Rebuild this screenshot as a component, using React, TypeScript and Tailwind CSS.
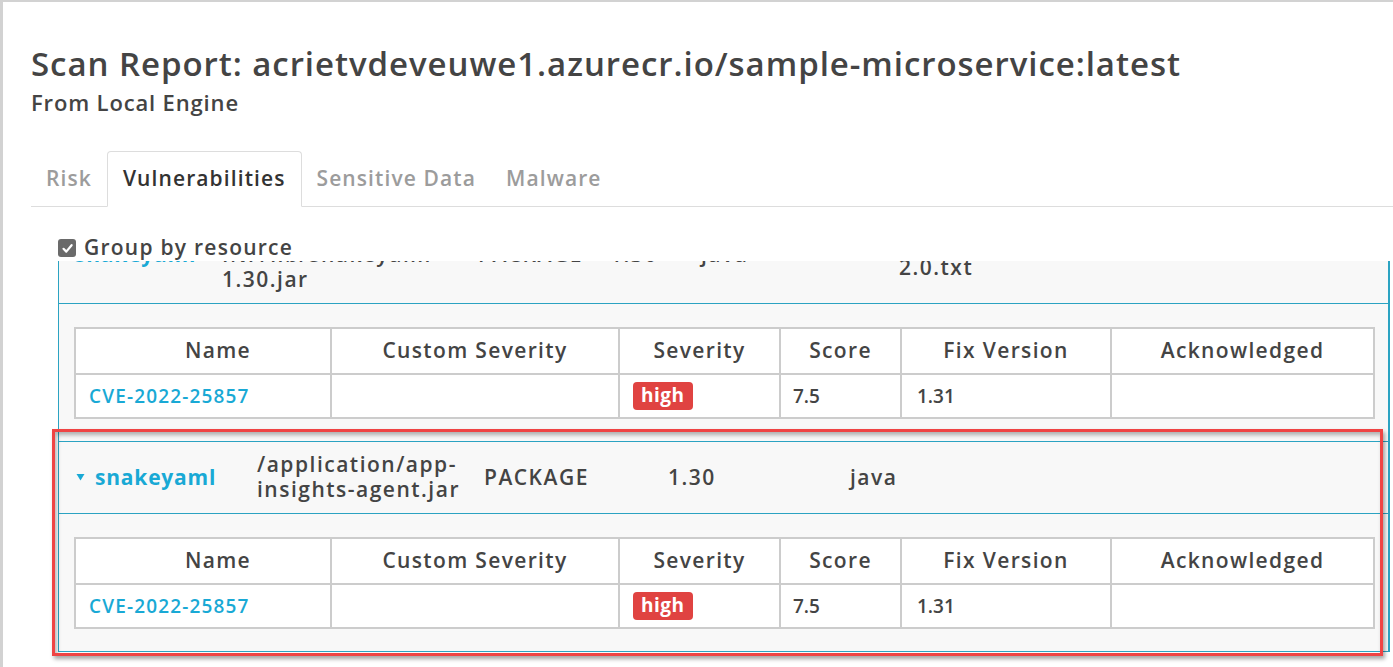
import React from "react";

const TEAL = "border-[#2ba3c2]";

function Check() {
  return (
    <span className="flex h-[18px] w-[18px] items-center justify-center rounded-[3px] bg-[#6a6a6a]">
      <svg width="13" height="13" viewBox="0 0 13 13" fill="none">
        <path d="M2.5 6.8 L5.3 9.6 L10.6 3.2" stroke="white" strokeWidth="2.2" strokeLinecap="round" strokeLinejoin="round" />
      </svg>
    </span>
  );
}

function Triangle() {
  return (
    <svg width="9" height="8" viewBox="0 0 9 8" className="mr-[10px] shrink-0">
      <path d="M0.5 1 L8.5 1 L4.5 7.5 Z" fill="#19a9d5" />
    </svg>
  );
}

function VulnTable() {
  const th = "border-2 border-[#cccccc] p-0 text-center text-[21px] font-semibold tracking-[1.35px] text-[#444]";
  return (
    <table className="w-[1299px] table-fixed border-collapse bg-white">
      <colgroup>
        <col className="w-[256px]" />
        <col className="w-[288px]" />
        <col className="w-[161px]" />
        <col className="w-[121px]" />
        <col className="w-[210px]" />
        <col className="w-[263px]" />
      </colgroup>
      <thead>
        <tr className="h-[46px]">
          <th className={`${th} pl-[30px]`}>Name</th>
          <th className={th}>Custom Severity</th>
          <th className={th}>Severity</th>
          <th className={th}>Score</th>
          <th className={th}>Fix Version</th>
          <th className={th}>Acknowledged</th>
        </tr>
      </thead>
      <tbody>
        <tr className="h-[44px]">
          <td className="border-2 border-[#cccccc] pl-[13px] text-[19px] font-semibold tracking-[1.15px] text-[#19a9d5]">CVE-2022-25857</td>
          <td className="border-2 border-[#cccccc]"></td>
          <td className="border-2 border-[#cccccc] pl-[13px]">
            <span className="inline-flex h-[28px] items-center rounded-[4px] bg-[#e04341] px-[8px] pb-[1px] text-[19px] font-bold leading-none tracking-[0.5px] text-white">
              high
            </span>
          </td>
          <td className="border-2 border-[#cccccc] pl-[12px] text-[19px] font-semibold text-[#444]">7.5</td>
          <td className="border-2 border-[#cccccc] pl-[15px] text-[19px] font-semibold text-[#444]">1.31</td>
          <td className="border-2 border-[#cccccc]"></td>
        </tr>
      </tbody>
    </table>
  );
}

export default function App() {
  const tab = "flex h-[55px] items-center px-[15px] text-[21px] font-semibold tracking-[1.1px] text-[#9c9c9c]";
  return (
    <div className="relative h-[667px] w-[1393px] overflow-hidden bg-white font-['Open_Sans',sans-serif] text-[#444]">
      <div className="h-full border-l-[3px] border-t-2 border-[#d2d2d2] pl-[28px]">
        <h1 className="mt-[42px] text-[33px] font-semibold leading-[40px] tracking-[0.95px] text-[#444]">
          Scan Report: acrietvdeveuwe1.azurecr.io/sample-microservice:latest
        </h1>
        <div className="mt-[6px] text-[22px] font-semibold leading-[24px] tracking-[0.85px] text-[#444]">From Local Engine</div>

        <div className="mt-[37px] flex h-[56px] items-end border-b border-[#dddddd]">
          <div className={tab}>Risk</div>
          <div className="-mb-px flex h-[56px] items-center rounded-t-[4px] border border-b-white border-[#dddddd] bg-white px-[15px] text-[21px] font-semibold tracking-[1.1px] text-[#333]">
            Vulnerabilities
          </div>
          <div className={tab}>Sensitive Data</div>
          <div className={tab}>Malware</div>
        </div>

        <label className="ml-[27px] mt-[31px] flex h-[20px] items-center gap-[8px] text-[21px] font-semibold tracking-[1.25px] text-[#444]">
          <Check />
          <span>Group by resource</span>
        </label>

        <div className="ml-[27px] mt-[3px] w-[1332px] overflow-hidden">
          <div className="-mt-[56px]">
            {/* Group 1 (partially scrolled out of view) */}
            <div className={`border-l border-r-2 border-t ${TEAL} bg-[#f8f8f8]`}>
              <div className={`grid grid-cols-[147px_256px_132px_91px_198px_1fr] items-center border-b ${TEAL} py-[11px] pl-[16px] text-[21px] font-semibold leading-[25px] tracking-[1.5px] text-[#444]`}>
                <div className="font-bold tracking-[0.8px] text-[#19a9d5]">snakeyaml</div>
                <div>
                  <div>/application/BOOT-</div>
                  <div>INF/lib/snakeyaml-</div>
                  <div>1.30.jar</div>
                </div>
                <div>PACKAGE</div>
                <div>1.30</div>
                <div>java</div>
                <div>
                  <div>/licenses/LICENSE-</div>
                  <div>2.0.txt</div>
                </div>
              </div>
              <div className="px-[15px] pb-[22px] pt-[23px]">
                <VulnTable />
              </div>
            </div>

            {/* Group 2 */}
            <div className={`border border-r-2 ${TEAL} bg-[#f8f8f8]`}>
              <div className={`grid grid-cols-[181px_227px_184px_182px_1fr] items-center border-b ${TEAL} pb-[11px] pt-[10px] pl-[17px] text-[21px] font-semibold leading-[25px] tracking-[1.5px] text-[#444]`}>
                <div className="flex items-center font-bold tracking-[0.8px] text-[#19a9d5]">
                  <Triangle />
                  <span>snakeyaml</span>
                </div>
                <div>
                  <div>/application/app-</div>
                  <div>insights-agent.jar</div>
                </div>
                <div>PACKAGE</div>
                <div>1.30</div>
                <div>java</div>
              </div>
              <div className="px-[15px] pb-[22px] pt-[23px]">
                <VulnTable />
              </div>
            </div>
          </div>
        </div>
      </div>

      {/* Red annotation highlight */}
      <div className="pointer-events-none absolute left-[52px] top-[429px] h-[227px] w-[1331px] border-[3px] border-[#ef4444] shadow-[2px_3px_4px_rgba(0,0,0,0.35),inset_2px_3px_4px_rgba(0,0,0,0.3)]"></div>
    </div>
  );
}
